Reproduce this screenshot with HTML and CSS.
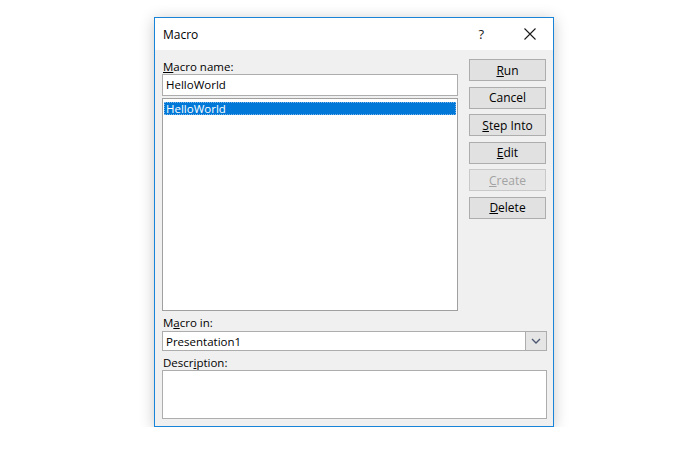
FILE: index.html
```html
<!DOCTYPE html>
<html lang="en">
<head>
  <meta charset="UTF-8">
  <title>Macro</title>
  <link rel="stylesheet" href="styles.css">
</head>
<body>
  <div class="finestra">
    <div class="titolo">
      <span class="titolo-testo">Macro</span>
      <span class="aiuto">?</span>
      <span class="chiudi">
        <svg width="12" height="12" viewBox="0 0 12 12"><path d="M0.5 0.5 L11.5 11.5 M11.5 0.5 L0.5 11.5" stroke="#1a1a1a" stroke-width="1.1"/></svg>
      </span>
    </div>
    <div class="corpo">
      <div class="riga">
        <div class="colonna">
          <div class="etichetta"><u>M</u>acro name:</div>
          <div class="campo">HelloWorld</div>
          <div class="lista">
            <div class="voce">HelloWorld</div>
          </div>
        </div>
        <div class="pulsanti">
          <button><u>R</u>un</button>
          <button>Cancel</button>
          <button><u>S</u>tep Into</button>
          <button><u>E</u>dit</button>
          <button class="spento"><u>C</u>reate</button>
          <button><u>D</u>elete</button>
        </div>
      </div>
      <div class="etichetta sotto">M<u>a</u>cro in:</div>
      <div class="tendina">
        <span class="tendina-testo">Presentation1</span>
        <span class="freccia">
          <svg width="10" height="6" viewBox="0 0 10 6"><path d="M1 1 L5 5 L9 1" fill="none" stroke="#4a5670" stroke-width="1.3"/></svg>
        </span>
      </div>
      <div class="etichetta sotto2">Descr<u>i</u>ption:</div>
      <div class="descrizione"></div>
    </div>
  </div>
</body>
</html>
```

FILE: styles.css
```css
* {
  box-sizing: border-box;
}
body {
  margin: 0;
  background-color: #ffffff;
  font-family: "Open Sans", "Noto Sans", sans-serif;
  font-size: 11.5px;
  color: #000000;
  padding: 17px 0 0 154px;
}
.finestra {
  width: 400px;
  height: 410px;
  border: 1px solid #1883d7;
  box-shadow: 0 2px 14px rgba(0, 0, 0, 0.22);
  display: flex;
  flex-direction: column;
}
.titolo {
  height: 32px;
  flex-shrink: 0;
  background-color: #ffffff;
  display: flex;
  align-items: center;
  padding-left: 8px;
}
.titolo-testo {
  flex: 1;
  font-size: 12px;
}
.aiuto {
  font-size: 13px;
  margin-right: 40px;
  color: #1a1a1a;
}
.chiudi {
  margin-right: 17px;
  display: flex;
}
.corpo {
  flex: 1;
  background-color: #f0f0f0;
  padding: 9px 7px 7px 7px;
}
.riga {
  display: flex;
  gap: 11px;
}
.colonna {
  width: 298px;
}
.etichetta {
  height: 15px;
  line-height: 15px;
  padding-left: 1px;
}
.campo {
  height: 22px;
  line-height: 20px;
  border: 1px solid #adadad;
  background-color: #ffffff;
  padding-left: 3px;
}
.lista {
  margin-top: 2px;
  height: 213px;
  border: 1px solid #a0a0a0;
  background-color: #ffffff;
  padding: 3px 1px 0 1px;
}
.voce {
  height: 13px;
  line-height: 13px;
  background-color: #0078d7;
  color: #ffffff;
  padding-left: 2px;
  outline: 1px dotted #7ab6ea;
  outline-offset: -1px;
}
.pulsanti {
  display: flex;
  flex-direction: column;
  gap: 5.6px;
}
button {
  width: 77px;
  height: 22px;
  background-color: #e1e1e1;
  border: 1px solid #adadad;
  font-family: inherit;
  font-size: 12px;
  color: #000000;
  padding: 0;
}
button.spento {
  color: #a3a3a3;
  border-color: #c9c9c9;
  background-color: #e6e6e6;
}
.sotto {
  margin-top: 4px;
}
.tendina {
  margin-top: 1px;
  width: 385px;
  height: 20px;
  border: 1px solid #adadad;
  background-color: #ffffff;
  display: flex;
  align-items: center;
}
.tendina-testo {
  flex: 1;
  padding-left: 3px;
}
.freccia {
  width: 21px;
  height: 18px;
  background-color: #e5e5e5;
  border-left: 1px solid #adadad;
  display: flex;
  align-items: center;
  justify-content: center;
}
.sotto2 {
  margin-top: 4px;
}
.descrizione {
  width: 385px;
  height: 49px;
  border: 1px solid #adadad;
  background-color: #ffffff;
}
```
